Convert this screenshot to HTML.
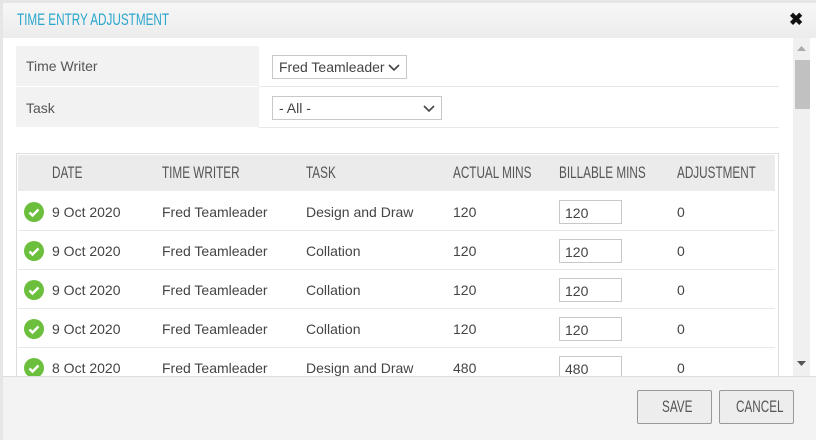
<!DOCTYPE html><html><head><style>
*{box-sizing:border-box;margin:0;padding:0}
body{width:816px;height:440px;background:#e6e6e6;font-family:"Liberation Sans",sans-serif;font-size:14px;color:#444;position:relative;overflow:hidden}
.n{display:inline-block;transform:scaleX(0.69);transform-origin:0 0;white-space:nowrap}
#dlg{position:absolute;left:3px;top:3px;width:813px;height:437px;background:#fff}
#hd{position:absolute;left:0;top:0;width:813px;height:35px;background:linear-gradient(#f7f7f7,#ececec)}
#hd .t{position:absolute;left:14px;top:7px;color:#2aa6cc;font-size:17px}
#x{position:absolute;left:786px;top:7px;font-size:17px;font-weight:bold;color:#111}
.a{position:absolute}
.lab{background:#f2f2f2;color:#555}
.sel{border:1px solid #c8c8c8;background:#fff;height:24px;padding:3px 6px;color:#444}
.sel svg{position:absolute;right:6px;top:8px}
.row{position:absolute;left:18px;width:757px;height:39px;border-bottom:1px solid #e8e8e8}
.row span{position:absolute;top:12px}
.chk{left:6px;top:10px!important;width:20px;height:20px;border-radius:50%;background:#6cbf3c}
.inp{position:absolute;left:541px;top:8px!important;width:63px;height:24px;border:1px solid #c8c8c8;padding:4px 0 0 5px}
.btn{position:absolute;top:390px;width:75px;height:34px;border:1px solid #999;border-radius:2px;background:#ededed;line-height:32px;color:#555;font-size:17px}
.hh span{top:8px;font-size:17px}
</style></head><body>
<div id="dlg">
<div id="hd"><div class="t n">TIME ENTRY ADJUSTMENT</div><div id="x">✖</div></div>
</div>
<div class="a lab" style="left:16px;top:46px;width:243px;height:40px;padding:12px 10px">Time Writer</div>
<div class="a" style="left:259px;top:86px;width:520px;height:1px;background:#e8e8e8"></div>
<div class="a lab" style="left:16px;top:87px;width:243px;height:40px;padding:13px 10px">Task</div>
<div class="a" style="left:259px;top:127px;width:520px;height:1px;background:#e8e8e8"></div>
<div class="a sel" style="left:272px;top:55px;width:135px">Fred Teamleader<svg width="12" height="8"><path d="M1 1l5 5 5-5" stroke="#444" stroke-width="1.6" fill="none"/></svg></div>
<div class="a sel" style="left:272px;top:96px;width:170px">- All -<svg width="12" height="8"><path d="M1 1l5 5 5-5" stroke="#444" stroke-width="1.6" fill="none"/></svg></div>
<div class="a" style="left:16px;top:153px;width:763px;height:230px;border:1px solid #ddd;border-bottom:none"></div>
<div class="a hh" style="left:18px;top:155px;width:757px;height:36px;background:#ebebeb;color:#555">
<span class="a n" style="left:34px">DATE</span><span class="a n" style="left:144px">TIME WRITER</span><span class="a n" style="left:288px">TASK</span><span class="a n" style="left:435px">ACTUAL MINS</span><span class="a n" style="left:541px">BILLABLE MINS</span><span class="a n" style="left:659px">ADJUSTMENT</span></div>
<div class="row" style="top:192px"><span class="chk"><svg width="20" height="20"><path d="M5.5 10.5l3 3 6-6" stroke="#fff" stroke-width="2.4" fill="none"/></svg></span><span style="left:34px">9 Oct 2020</span><span style="left:144px">Fred Teamleader</span><span style="left:288px">Design and Draw</span><span style="left:435px">120</span><span class="inp">120</span><span style="left:659px">0</span></div>
<div class="row" style="top:231px"><span class="chk"><svg width="20" height="20"><path d="M5.5 10.5l3 3 6-6" stroke="#fff" stroke-width="2.4" fill="none"/></svg></span><span style="left:34px">9 Oct 2020</span><span style="left:144px">Fred Teamleader</span><span style="left:288px">Collation</span><span style="left:435px">120</span><span class="inp">120</span><span style="left:659px">0</span></div>
<div class="row" style="top:270px"><span class="chk"><svg width="20" height="20"><path d="M5.5 10.5l3 3 6-6" stroke="#fff" stroke-width="2.4" fill="none"/></svg></span><span style="left:34px">9 Oct 2020</span><span style="left:144px">Fred Teamleader</span><span style="left:288px">Collation</span><span style="left:435px">120</span><span class="inp">120</span><span style="left:659px">0</span></div>
<div class="row" style="top:309px"><span class="chk"><svg width="20" height="20"><path d="M5.5 10.5l3 3 6-6" stroke="#fff" stroke-width="2.4" fill="none"/></svg></span><span style="left:34px">9 Oct 2020</span><span style="left:144px">Fred Teamleader</span><span style="left:288px">Collation</span><span style="left:435px">120</span><span class="inp">120</span><span style="left:659px">0</span></div>
<div class="row" style="top:348px"><span class="chk"><svg width="20" height="20"><path d="M5.5 10.5l3 3 6-6" stroke="#fff" stroke-width="2.4" fill="none"/></svg></span><span style="left:34px">8 Oct 2020</span><span style="left:144px">Fred Teamleader</span><span style="left:288px">Design and Draw</span><span style="left:435px">480</span><span class="inp">480</span><span style="left:659px">0</span></div>
<div class="a" style="left:793px;top:38px;width:17px;height:338px;background:#f0f0f0"></div>
<div class="a" style="left:795px;top:60px;width:15px;height:49px;background:#c1c1c1"></div>
<svg class="a" style="left:797px;top:46px" width="9" height="6"><path d="M0 5h9L4.5 0z" fill="#aaa"/></svg>
<svg class="a" style="left:797px;top:361px" width="9" height="6"><path d="M0 0h9L4.5 5z" fill="#555"/></svg>
<div class="a" style="left:3px;top:376px;width:813px;height:64px;background:#f3f3f3;border-top:1px solid #ddd"></div>
<div class="btn" style="left:637px"><span class="n" style="position:absolute;left:24px">SAVE</span></div>
<div class="btn" style="left:719px"><span class="n" style="position:absolute;left:16px">CANCEL</span></div>
</body></html>
